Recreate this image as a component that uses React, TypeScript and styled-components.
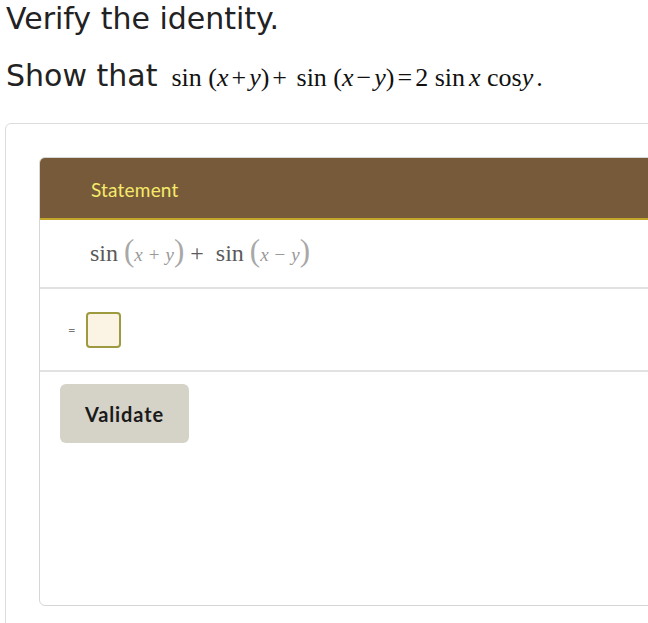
import React from "react";
import styled, { createGlobalStyle } from "styled-components";

const GlobalStyle = createGlobalStyle`
  html, body {
    margin: 0;
    padding: 0;
    background: #fff;
    overflow: hidden;
  }
  body {
    font-family: "DejaVu Sans", Verdana, sans-serif;
  }
`;

const Page = styled.div`
  width: 648px;
  height: 623px;
  overflow: hidden;
`;

const Title = styled.h1`
  margin: 0;
  padding: 1px 0 0 6px;
  height: 36px;
  font-family: "DejaVu Sans", Verdana, sans-serif;
  font-weight: 400;
  font-size: 30px;
  line-height: 36px;
  color: #222;
`;

const Prompt = styled.p`
  margin: 21px 0 0 6px;
  height: 36px;
  display: flex;
  align-items: baseline;
  gap: 14px;
  font-family: "DejaVu Sans", Verdana, sans-serif;
  font-size: 30px;
  line-height: 36px;
  color: #222;
`;

const Math = styled.span`
  font-family: "Liberation Serif", "Times New Roman", serif;
  font-size: 26px;
  line-height: 36px;
  color: #111;
  white-space: pre;
`;

const Var = styled.i<{ $gap?: boolean }>`
  font-style: italic;
  margin-left: ${(p) => (p.$gap ? "4px" : "0")};
`;

const Op = styled.span`
  margin: 0 3px;
`;

const Card = styled.div`
  margin: 29px 0 0 5px;
  width: 720px;
  height: 520px;
  border: 1px solid #dcdcdc;
  border-radius: 6px;
  padding: 33px 0 0 33px;
  box-sizing: border-box;
`;

const Panel = styled.div`
  width: 700px;
  height: 449px;
  border: 1px solid #d6d6d6;
  border-radius: 6px;
  overflow: hidden;
  box-sizing: border-box;
`;

const Header = styled.div`
  height: 63px;
  margin: -1px 0 0 -1px;
  background: #775a3a;
  border-top: 1px solid #8c7420;
  border-left: 1px solid #8c7420;
  border-bottom: 2px solid #c4a52c;
  border-radius: 6px 0 0 0;
  box-sizing: border-box;
  display: flex;
  align-items: center;
  padding: 3px 0 0 51px;
  font-family: "Lato", "Open Sans", sans-serif;
  font-size: 19px;
  letter-spacing: 0.2px;
  color: #f6ea6a;
`;

const Row = styled.div<{ $h: number }>`
  height: ${(p) => p.$h}px;
  border-bottom: 2px solid #e2e2e2;
  box-sizing: border-box;
  display: flex;
  align-items: center;
`;

const Expr = styled.span`
  padding: 0 0 6px 50px;
  font-family: "Liberation Serif", "Times New Roman", serif;
  font-size: 24px;
  color: #5a5a5a;
  white-space: pre;
`;

const Paren = styled.span`
  font-size: 31px;
  color: #a8a8a8;
`;

const Light = styled.span<{ $italic?: boolean }>`
  font-size: 19px;
  color: #999;
  font-style: ${(p) => (p.$italic ? "italic" : "normal")};
`;

const Equals = styled.span`
  padding: 0 0 0 28px;
  font-family: "Lato", sans-serif;
  font-size: 13px;
  color: #777;
`;

const Blank = styled.span`
  margin-left: 10px;
  width: 35px;
  height: 36px;
  box-sizing: border-box;
  border: 2px solid #9e9a40;
  border-radius: 4px;
  background: #fbf4e4;
`;

const Actions = styled.div`
  padding: 12px 0 0 20px;
`;

const Button = styled.button`
  width: 129px;
  height: 59px;
  border: none;
  border-radius: 6px;
  background: #d5d2c8;
  font-family: "Lato", "Open Sans", sans-serif;
  font-size: 20px;
  font-weight: 700;
  letter-spacing: 0.9px;
  color: #1a1a1a;
`;

export default function App() {
  return (
    <Page>
      <GlobalStyle />
      <Title>Verify the identity.</Title>
      <Prompt>
        Show that
        <Math>
          sin (<Var>x</Var>
          <Op>+</Op>
          <Var>y</Var>)<Op>+</Op> sin (<Var>x</Var>
          <Op>−</Op>
          <Var>y</Var>)<Op>=</Op>2 sin<Var $gap>x</Var> cos<Var>y</Var>
          <Op>.</Op>
        </Math>
      </Prompt>
      <Card>
        <Panel>
          <Header>Statement</Header>
          <Row $h={69}>
            <Expr>
              sin <Paren>(</Paren>
              <Light $italic>x</Light> <Light>+</Light> <Light $italic>y</Light>
              <Paren>)</Paren> +  sin <Paren>(</Paren>
              <Light $italic>x</Light> <Light>−</Light> <Light $italic>y</Light>
              <Paren>)</Paren>
            </Expr>
          </Row>
          <Row $h={83}>
            <Equals>=</Equals>
            <Blank />
          </Row>
          <Actions>
            <Button>Validate</Button>
          </Actions>
        </Panel>
      </Card>
    </Page>
  );
}
